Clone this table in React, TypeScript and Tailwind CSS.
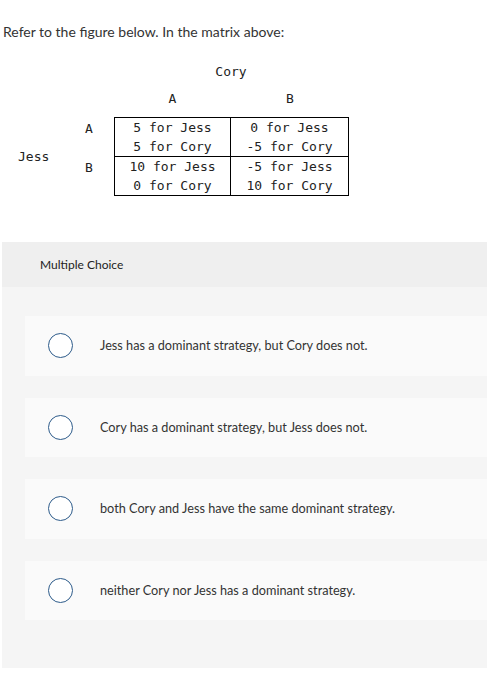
const mono = "font-['DejaVu_Sans_Mono','Liberation_Mono',monospace]"

const options = [
  'Jess has a dominant strategy, but Cory does not.',
  'Cory has a dominant strategy, but Jess does not.',
  'both Cory and Jess have the same dominant strategy.',
  'neither Cory nor Jess has a dominant strategy.',
]

function Cell({ top, bottom, className = '' }: { top: string; bottom: string; className?: string }) {
  return (
    <div className={`h-[38px] flex flex-col items-center justify-center leading-[19px] ${className}`}>
      <span>{top}</span>
      <span>{bottom}</span>
    </div>
  )
}

export default function App() {
  return (
    <div className="w-[487px] h-[687px] bg-white overflow-hidden font-['Lato','Open_Sans',sans-serif] text-[#333]">
      <p className="pt-[23px] pl-[3px] text-[14px] leading-[17px]">Refer to the figure below. In the matrix above:</p>

      <div className={`${mono} text-[13px] leading-[19px] text-[#222] mt-[22px]`}>
        <div className="flex">
          <div className="w-[231px]" />
          <div className="w-0 flex justify-center">Cory</div>
        </div>
        <div className="flex mt-[8px]">
          <div className="w-[114px]" />
          <div className="w-[117px] text-center">A</div>
          <div className="w-[118px] text-center">B</div>
        </div>
        <div className="flex mt-[9px] items-center">
          <div className="w-[64px] pl-[18px]">Jess</div>
          <div className="w-[50px] flex flex-col pl-[21px]">
            <span className="h-[39px] pt-[1px]">A</span>
            <span className="h-[39px] pt-[1px]">B</span>
          </div>
          <div className="grid grid-cols-[116px_117px] border border-black">
            <Cell top="5 for Jess" bottom="5 for Cory" className="border-r border-b border-black h-[39px]" />
            <Cell top="0 for Jess" bottom="-5 for Cory" className="border-b border-black h-[39px]" />
            <Cell top="10 for Jess" bottom="0 for Cory" className="border-r border-black" />
            <Cell top="-5 for Jess" bottom="10 for Cory" />
          </div>
        </div>
      </div>

      <div className="mt-[46px] ml-[2px] bg-[#f5f5f5] pb-[48px]">
        <div className="h-[45px] bg-[#efefef] flex items-center pl-[38px] text-[12px] text-[#222]">Multiple Choice</div>
        <div className="pt-[29px] pl-[23px] flex flex-col gap-[22px]">
          {options.map((o) => (
            <div key={o} className="h-[59.5px] bg-[#fafafa] flex items-center">
              <div className="ml-[23px] w-[25px] h-[25px] rounded-full border-[1.5px] border-[#2d5b8a] bg-white" />
              <span className="ml-[27px] text-[12.7px] text-[#333]">{o}</span>
            </div>
          ))}
        </div>
      </div>
    </div>
  )
}
